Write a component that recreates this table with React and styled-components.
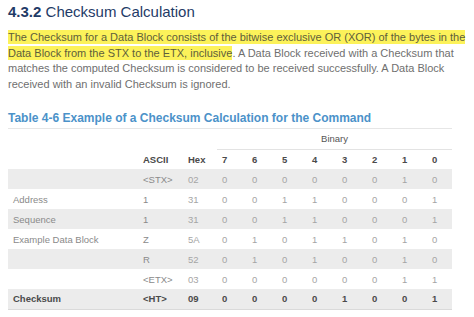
import React from 'react';
import styled, {createGlobalStyle} from 'styled-components';

const Global = createGlobalStyle`
  body {
    margin: 0;
    background: #fff;
    font-family: "Liberation Sans", Arial, sans-serif;
  }
`;

const Page = styled.div`
  padding: 3px 8px 0 8px;
  width: 458px;
`;

const Heading = styled.h2`
  margin: 0;
  font-size: 15px;
  line-height: 18px;
  font-weight: 400;
  color: #1f3b67;
  white-space: nowrap;
`;

const SectionNum = styled.b`
  font-weight: 700;
`;

const Para = styled.p`
  margin: 9px 0 0 0;
  font-size: 11px;
  line-height: 15.5px;
  color: #6f6f6f;
  white-space: nowrap;
`;

const Mark = styled.span`
  background: #fcf25a;
  color: #5e5e3a;
  padding: 1px 0;
`;

const Caption = styled.div`
  margin-top: 16px;
  width: 444px;
  height: 20px;
  line-height: 20px;
  font-size: 12px;
  font-weight: 700;
  color: #4b92c9;
  border-bottom: 1px solid #e6e6e6;
  white-space: nowrap;
`;

const Table = styled.table`
  width: 444px;
  border-collapse: collapse;
  table-layout: fixed;
  font-size: 9.5px;
`;

const Row = styled.tr`
  height: 20px;
  background: ${p => (p.$shade ? '#ececec' : '#fff')};
  border-bottom: ${p => (p.$last ? '1px solid #dadada' : 'none')};
`;

const Cell = styled.td`
  padding: 0 0 0 5px;
  text-align: left;
  white-space: nowrap;
  color: ${p => (p.$strong ? '#4a4a4a' : p.$label ? '#8a8a8a' : '#a5a5a5')};
  font-weight: ${p => (p.$strong ? 700 : 400)};
`;

const GroupHead = styled.td`
  text-align: center;
  color: #555;
  border-bottom: 1px solid #e3e3e3;
`;

const rows = [
  ['', '<STX>', '02', '00000010'],
  ['Address', '1', '31', '00110001'],
  ['Sequence', '1', '31', '00110001'],
  ['Example Data Block', 'Z', '5A', '01011010'],
  ['', 'R', '52', '01010010'],
  ['', '<ETX>', '03', '00000011'],
];

export default function App() {
  return (
    <>
      <Global />
      <Page>
        <Heading>
          <SectionNum>4.3.2</SectionNum> Checksum Calculation
        </Heading>
        <Para>
          <Mark>The Checksum for a Data Block consists of the bitwise exclusive OR (XOR) of the bytes in the</Mark>
          <br />
          <Mark>Data Block from the STX to the ETX, inclusive</Mark>. A Data Block received with a Checksum that
          <br />
          matches the computed Checksum is considered to be received successfully. A Data Block
          <br />
          received with an invalid Checksum is ignored.
        </Para>
        <Caption>Table 4-6 Example of a Checksum Calculation for the Command</Caption>
        <Table>
          <colgroup>
            <col style={{width: 130}} />
            <col style={{width: 45}} />
            <col style={{width: 34}} />
            {[0, 1, 2, 3, 4, 5, 6].map(i => (
              <col key={i} style={{width: 30}} />
            ))}
            <col style={{width: 25}} />
          </colgroup>
          <tbody>
            <Row>
              <Cell />
              <Cell />
              <Cell />
              <GroupHead colSpan={8}>Binary</GroupHead>
            </Row>
            <Row>
              <Cell />
              <Cell $strong>ASCII</Cell>
              <Cell $strong>Hex</Cell>
              {[7, 6, 5, 4, 3, 2, 1, 0].map(b => (
                <Cell key={b} $strong>{b}</Cell>
              ))}
            </Row>
            {rows.map((r, i) => (
              <Row key={i} $shade={i % 2 === 0}>
                <Cell $label>{r[0]}</Cell>
                <Cell $label>{r[1]}</Cell>
                <Cell>{r[2]}</Cell>
                {r[3].split('').map((d, j) => (
                  <Cell key={j}>{d}</Cell>
                ))}
              </Row>
            ))}
            <Row $shade $last>
              <Cell $strong>Checksum</Cell>
              <Cell $strong>{'<HT>'}</Cell>
              <Cell $strong>09</Cell>
              {'00001001'.split('').map((d, j) => (
                <Cell key={j} $strong>{d}</Cell>
              ))}
            </Row>
          </tbody>
        </Table>
      </Page>
    </>
  );
}
